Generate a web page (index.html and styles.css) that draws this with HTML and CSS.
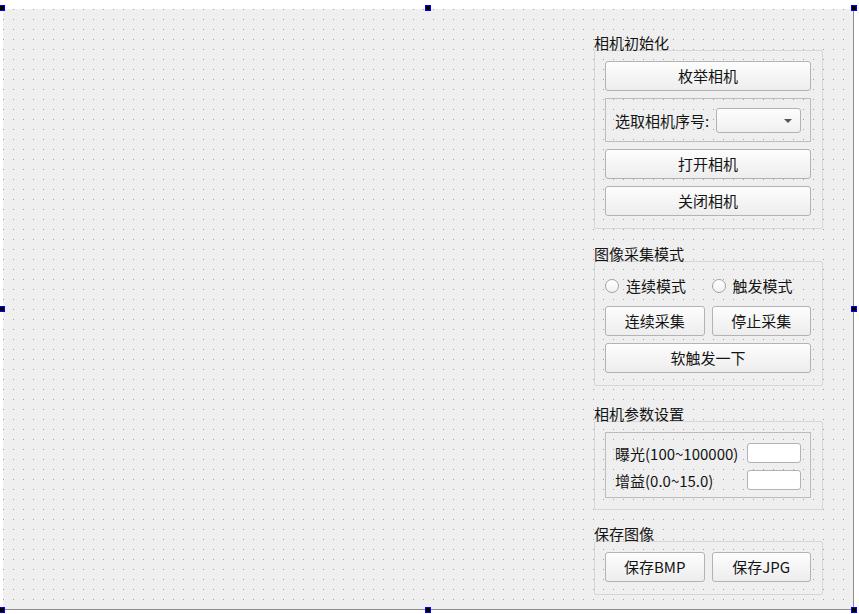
FILE: index.html
```html
<!DOCTYPE html>
<html lang="zh-CN">
<head>
<meta charset="utf-8">
<title>Camera Form</title>
<link rel="stylesheet" href="styles.css">
</head>
<body>
<div class="canvas">
  <div class="form">
    <div class="panel">
      <div class="group g1">
        <div class="group-title">相机初始化</div>
        <div class="group-frame">
          <div class="btn">枚举相机</div>
          <div class="inner-frame combo-row">
            <span class="label">选取相机序号:</span>
            <div class="combo"><span class="arrow"></span></div>
          </div>
          <div class="btn">打开相机</div>
          <div class="btn">关闭相机</div>
        </div>
      </div>

      <div class="group g2">
        <div class="group-title">图像采集模式</div>
        <div class="group-frame">
          <div class="two-col radio-row">
            <label class="radio"><span class="circle"></span><span>连续模式</span></label>
            <label class="radio"><span class="circle"></span><span>触发模式</span></label>
          </div>
          <div class="two-col">
            <div class="btn">连续采集</div>
            <div class="btn">停止采集</div>
          </div>
          <div class="btn">软触发一下</div>
        </div>
      </div>

      <div class="group g3">
        <div class="group-title">相机参数设置</div>
        <div class="group-frame">
          <div class="inner-frame params">
            <div class="param-row"><span class="label">曝光(100~100000)</span><div class="edit"></div></div>
            <div class="param-row"><span class="label">增益(0.0~15.0)</span><div class="edit"></div></div>
          </div>
        </div>
      </div>

      <div class="group g4">
        <div class="group-title">保存图像</div>
        <div class="group-frame">
          <div class="two-col">
            <div class="btn">保存BMP</div>
            <div class="btn">保存JPG</div>
          </div>
        </div>
      </div>
    </div>
  </div>

  <span class="handle h-tl"></span>
  <span class="handle h-tm"></span>
  <span class="handle h-tr"></span>
  <span class="handle h-ml"></span>
  <span class="handle h-mr"></span>
  <span class="handle h-bl"></span>
  <span class="handle h-bm"></span>
  <span class="handle h-br"></span>
</div>
</body>
</html>
```

FILE: styles.css
```css
html, body {
  margin: 0;
  padding: 0;
  background: #ffffff;
}

body {
  font-family: "Noto Sans CJK SC", "Noto Sans", sans-serif;
  font-size: 15px;
  color: #141414;
}

.canvas {
  position: relative;
  width: 859px;
  height: 614px;
  overflow: hidden;
}

.form {
  box-sizing: border-box;
  margin: 9px 0 0 3px;
  width: 851px;
  height: 601px;
  background-color: #efefef;
  background-image: conic-gradient(at 1px 1px, transparent 270deg, #a2a2a2 0);
  background-size: 10px 10px;
  border-right: 1px solid #8e8e8e;
  border-bottom: 1px solid #8e8e8e;
  display: flex;
  padding: 26px 0 0 591px;
}

.panel {
  width: 229px;
  display: flex;
  flex-direction: column;
}

.group-title {
  height: 15px;
  line-height: 15px;
  white-space: nowrap;
}

.group-frame {
  box-sizing: border-box;
  border: 1px solid #d6d6d6;
  border-radius: 2px;
  padding: 10px 11px 11px 10px;
  display: flex;
  flex-direction: column;
  gap: 7px;
}

.g1 .group-frame { height: 179px; }
.g2 { margin-top: 17px; }
.g2 .group-frame { height: 125px; }
.g3 { margin-top: 20px; }
.g3 .group-frame { height: 89px; }
.g4 { margin-top: 16px; }
.g4 .group-frame { height: 54px; }

.btn {
  box-sizing: border-box;
  height: 30px;
  line-height: 28px;
  text-align: center;
  border: 1px solid #b3b3b3;
  border-radius: 3px;
  background: linear-gradient(#fdfdfd, #ededed);
  white-space: nowrap;
}

.inner-frame {
  box-sizing: border-box;
  border: 1px solid #bcbcbc;
}

.combo-row {
  height: 44px;
  padding: 0 9px;
  display: flex;
  align-items: center;
  justify-content: space-between;
}

.combo {
  box-sizing: border-box;
  width: 85px;
  height: 25px;
  border: 1px solid #b3b3b3;
  border-radius: 3px;
  background: linear-gradient(#fdfdfd, #f0f0f0);
  position: relative;
}

.arrow {
  position: absolute;
  right: 8px;
  top: 10px;
  width: 0;
  height: 0;
  border-left: 4px solid transparent;
  border-right: 4px solid transparent;
  border-top: 4px solid #555555;
}

.two-col {
  display: grid;
  grid-template-columns: 1fr 1fr;
  column-gap: 7px;
}

.radio-row {
  height: 27px;
  align-items: center;
}

.radio {
  display: flex;
  align-items: center;
  gap: 7px;
  white-space: nowrap;
}

.circle {
  box-sizing: border-box;
  width: 14px;
  height: 14px;
  border-radius: 50%;
  border: 1px solid #a2a2a2;
  background: linear-gradient(#ffffff, #f2f2f2);
  flex: none;
}

.params {
  height: 66px;
  padding: 10px 9px 8px 9px;
  display: flex;
  flex-direction: column;
  gap: 7px;
}

.param-row {
  height: 20px;
  display: flex;
  align-items: center;
  justify-content: space-between;
}

.label {
  white-space: nowrap;
}

.edit {
  box-sizing: border-box;
  width: 54px;
  height: 20px;
  border: 1px solid #b3b3b3;
  border-radius: 3px;
  background: #ffffff;
}

.handle {
  position: absolute;
  box-sizing: border-box;
  width: 6px;
  height: 6px;
  background: #000000;
  border: 1px solid #0000ff;
}

.h-tl { left: -1px; top: 5px; }
.h-tm { left: 425px; top: 5px; }
.h-tr { left: 851px; top: 5px; }
.h-ml { left: -1px; top: 306px; }
.h-mr { left: 851px; top: 306px; }
.h-bl { left: -1px; top: 607px; }
.h-bm { left: 425px; top: 607px; }
.h-br { left: 851px; top: 607px; }
```
